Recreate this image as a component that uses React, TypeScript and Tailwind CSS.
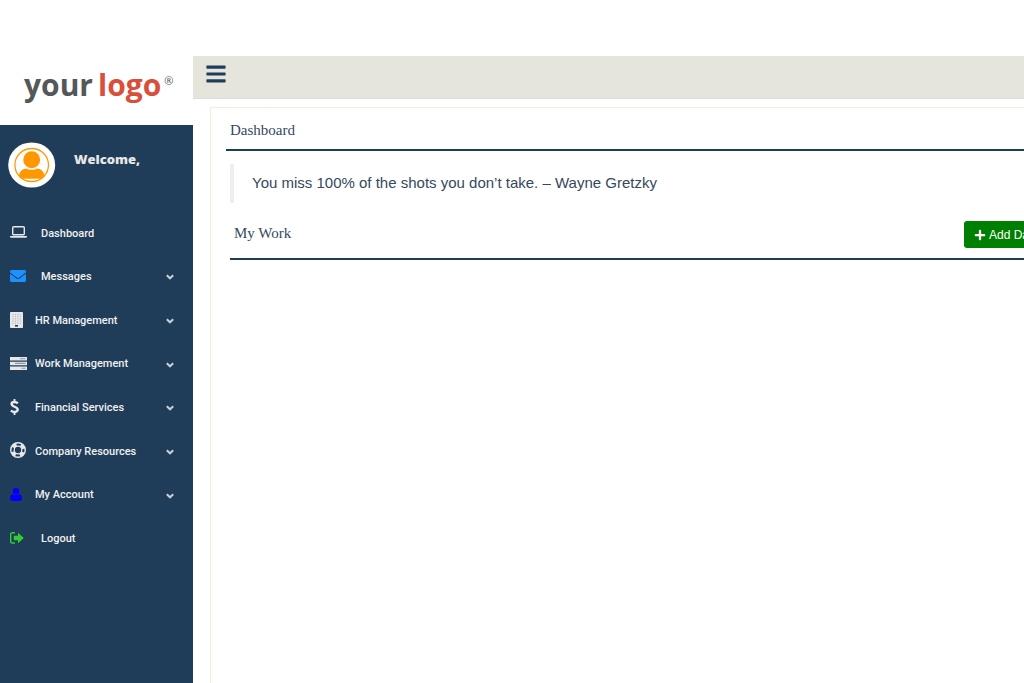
import React from 'react';
import { FaBars, FaEnvelope, FaPlus } from 'react-icons/fa';

interface NavItem {
    label: string;
    icon: React.ReactNode;
    wide?: boolean;
    expandable?: boolean;
}

const LaptopIcon = () => (
    <svg width="17" height="12" viewBox="0 0 17 12" fill="none" aria-hidden="true">
        <rect x="2.7" y="0.7" width="11.6" height="8" rx="1" stroke="#e8e8e8" strokeWidth="1.4" />
        <path d="M0 10h17v.6q0 1.2-1.4 1.2H1.4Q0 11.800 0 10.600z" fill="#e8e8e8" />
    </svg>
);

const BuildingIcon = () => (
    <svg width="13" height="16" viewBox="0 0 13 16" aria-hidden="true">
        <rect width="13" height="16" rx="0.8" fill="#e8e8e8" />
        <path d="M2.500 2.500h8.500M2.500 4.700h8.500M2.500 6.900h8.500M2.500 9.100h8.500M2.500 11.300h8.500" stroke="#a3aeb8" strokeWidth="1" strokeDasharray="1 1.400" />
        <rect x="5" y="13" width="3" height="1.600" fill="#1f3d59" />
    </svg>
);

const ServerIcon = () => (
    <svg width="17" height="13" viewBox="0 0 17 13" aria-hidden="true">
        <path d="M0 0h17v3.500H0zM0 4.700h17v3.500H0zM0 9.400h17v3.500H0z" fill="#e8e8e8" />
        <path d="M10 1.700h5.500M5 6.400h10.500M11.500 11.200h4" stroke="#8798a8" strokeWidth="1.100" />
    </svg>
);

const DollarIcon = () => (
    <svg width="9" height="16" viewBox="0 0 9 16" fill="none" stroke="#e8e8e8" strokeWidth="2.4" aria-hidden="true">
        <path d="M7.900 4.300Q6.300 3 4.400 3 1.600 3 1.600 5.100c0 3 6.100 2.300 6.100 5.500 0 2.300-3.700 3.300-6.900 1" />
        <path d="M4.500 0v3M4.500 12.500V16" strokeWidth="1.900" />
    </svg>
);

const LifeRingIcon = () => (
    <svg width="16" height="16" viewBox="0 0 16 16" fill="none" aria-hidden="true">
        <circle cx="8" cy="8" r="7.300" stroke="#e8e8e8" strokeWidth="1.400" />
        <circle cx="8" cy="8" r="3.800" stroke="#e8e8e8" strokeWidth="1.300" />
        <circle cx="8" cy="8" r="5.600" stroke="#e8e8e8" strokeWidth="3.400" strokeDasharray="4.400 4.396" strokeDashoffset="-2.200" />
    </svg>
);

const UserIcon = () => (
    <svg width="12" height="13" viewBox="0 0 12 13" fill="#0000ff" aria-hidden="true">
        <circle cx="6" cy="3.400" r="3.300" />
        <path d="M2.600 5.900Q6 8.400 9.400 5.900 12 6.600 12 10.600q0 2.400-2.200 2.400H2.200Q0 13 0 10.600 0 6.600 2.600 5.900z" />
    </svg>
);

const SignOutIcon = () => (
    <svg width="14" height="12" viewBox="0 0 14 12" aria-hidden="true">
        <path d="M5 .8H2.500Q.7.800.7 2.600v6.600Q.7 11 2.500 11H5" fill="none" stroke="#32cd32" strokeWidth="1.400" />
        <path d="M8 .8 13.800 6 8 11.200V8.200H3.800V3.800H8z" fill="#32cd32" />
    </svg>
);

const Chevron = () => (
    <svg width="8" height="6" viewBox="0 0 8 6" fill="none" stroke="#c9d1d8" strokeWidth="2" aria-hidden="true">
        <path d="M.8 1.200 4 4.300l3.200-3.100" />
    </svg>
);

const Avatar = () => (
    <svg width="48" height="46" viewBox="0 0 48 46" role="img" aria-label="Profile">
        <ellipse cx="23.700" cy="23" rx="23.500" ry="22.600" fill="#fff" />
        <ellipse cx="23.700" cy="23" rx="16.800" ry="16.500" fill="none" stroke="#ff9800" strokeWidth="1.300" />
        <circle cx="23.700" cy="17.800" r="8.500" fill="#ff9800" />
        <path d="M10.700 34q1.500-7 7-7.500 6 2.600 12 0 5.500.5 7 7.500l-2.700 2.800H13.400z" fill="#ff9800" />
    </svg>
);

const NAV: NavItem[] = [
    { label: 'Dashboard', icon: <LaptopIcon />, wide: true },
    { label: 'Messages', icon: <FaEnvelope size={16} color="#1e90ff" />, wide: true, expandable: true },
    { label: 'HR Management', icon: <BuildingIcon />, expandable: true },
    { label: 'Work Management', icon: <ServerIcon />, expandable: true },
    { label: 'Financial Services', icon: <DollarIcon />, expandable: true },
    { label: 'Company Resources', icon: <LifeRingIcon />, expandable: true },
    { label: 'My Account', icon: <UserIcon />, expandable: true },
    { label: 'Logout', icon: <SignOutIcon />, wide: true },
];

const NavLink: React.FC<{ item: NavItem }> = ({ item }) => (
    <li className="flex">
        <a href="#" className="flex flex-1 items-center pl-[10px] pr-[19px] text-[11px] font-medium text-[#f0f0f0]">
            <span className={item.wide ? 'w-[31px] pb-[3px]' : 'w-[25px] pb-[3px]'}>{item.icon}</span>
            <span className="flex-1">{item.label}</span>
            {item.expandable && <Chevron />}
        </a>
    </li>
);

const Sidebar = () => (
    <aside className="flex w-[193px] shrink-0 flex-col">
        <a href="#" className="flex h-[69px] items-start gap-[3px] pl-6 pt-[9px] font-['Open_Sans',sans-serif] text-[30px] leading-[40px] font-bold">
            <span className="text-[#555759]">your</span>
            <span className="pl-[2px] text-[#d94f3c]">logo</span>
            <span className="text-[11px] leading-8 font-normal text-[#555759]">®</span>
        </a>
        <div className="flex-1 bg-[#1f3d59] font-[Roboto,sans-serif]">
            <div className="flex h-[87px] items-start pl-2 pt-[17px]">
                <Avatar />
                <span className="pl-[18px] pt-[7px] font-['Open_Sans',sans-serif] text-[13px] leading-5 font-extrabold text-[#e8e8e8]">Welcome,</span>
            </div>
            <nav>
                <ul className="grid h-[349px] grid-rows-8">
                    {NAV.map((item) => <NavLink key={item.label} item={item} />)}
                </ul>
            </nav>
        </div>
    </aside>
);

export default function App() {
    return (
        <div className="flex min-h-screen overflow-hidden bg-white pt-14 font-['Liberation_Sans',Arial,sans-serif] text-[#34495e]">
            <Sidebar />
            <div className="flex min-w-0 flex-1 flex-col">
                <header className="h-[43px] border-b border-[#d9dee4] bg-[#e5e5dc] pl-3 pt-[7px]">
                    <button type="button" aria-label="Toggle menu" className="block text-[#1f3d59]">
                        <FaBars size={22} />
                    </button>
                </header>

                {/* The panel runs past the right edge of the window */}
                <main className="-mr-12 ml-[17px] mt-2 flex-1 border border-b-0 border-[#fdebd7] pl-[15px]">
                    <h1 className="h-[43px] border-b-2 border-[#1f3d59] pl-1 pt-3 font-['Liberation_Serif',serif] text-[15px] leading-5">Dashboard</h1>
                    <section className="pl-1 pt-[13px]">
                        <blockquote className="border-l-4 border-[#eeeeee] pb-[9px] pt-[7px] pl-[18px] text-[15px] leading-[23px]">
                            You miss 100% of the shots you don’t take. – Wayne Gretzky
                        </blockquote>
                        <div className="flex h-[57px] items-end justify-between border-b-2 border-[#1f3d59] pb-[10px] pl-1 pr-[22px]">
                            <h2 className="pb-[5px] font-['Liberation_Serif',serif] text-[15px] leading-5">My Work</h2>
                            <button type="button" className="flex h-[27px] items-center gap-[3px] rounded-[3px] bg-[#008000] px-[10px] text-[12px] text-white">
                                <FaPlus size={12} />
                                Add Data
                            </button>
                        </div>
                    </section>
                </main>
            </div>
        </div>
    );
}
